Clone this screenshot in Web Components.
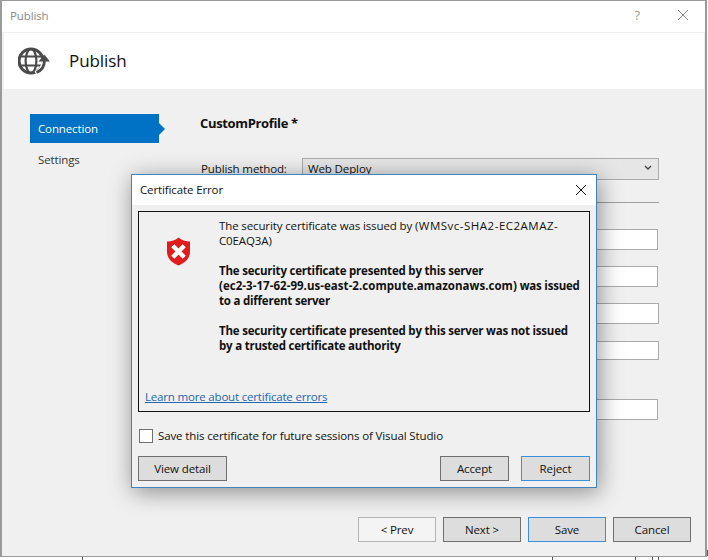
<!DOCTYPE html>
<html>
<head>
<meta charset="utf-8">
<title>Publish</title>
<style>
  html, body { margin: 0; width: 708px; height: 560px; }
  html { background: #fff; }
  body {
    font: 11.5px "Open Sans", "Liberation Sans", sans-serif;
    letter-spacing: -0.12px;
    color: #111;
    overflow: hidden;
    /* bits of the window behind that stick out under and beside the dialog */
    background:
      linear-gradient(#555, #555) 82px 557px / 1px 3px no-repeat,
      linear-gradient(#555, #555) 552px 557px / 1px 3px no-repeat,
      linear-gradient(#555, #555) 635px 557px / 1px 3px no-repeat,
      linear-gradient(#555, #555) 652px 557px / 1px 3px no-repeat,
      linear-gradient(#555, #555) 658px 557px / 1px 3px no-repeat,
      linear-gradient(#555, #555) 707px 550px / 1px 6px no-repeat,
      #fff;
  }
</style>
</head>
<body>
<publish-window>
  <nav-item slot="nav" selected>Connection</nav-item>
  <nav-item slot="nav">Settings</nav-item>

  <form-field slot="form" label="Publish method:" kind="select" value="Web Deploy" height="22" mt="0"></form-field>
  <div slot="form" style="height:1px;background:#a0a0a0;margin:22px 0 26px;width:459px"></div>
  <form-field slot="form" height="21" mt="0" w="356"></form-field>
  <form-field slot="form" height="21" mt="16" w="356"></form-field>
  <form-field slot="form" height="21" mt="16" w="357"></form-field>
  <form-field slot="form" height="19" mt="17" w="357"></form-field>
  <form-field slot="form" height="21" mt="39" w="356"></form-field>

  <vs-button slot="footer" kind="disabled" w="78">&lt; Prev</vs-button>
  <vs-button slot="footer" w="78">Next &gt;</vs-button>
  <vs-button slot="footer" kind="default" w="78">Save</vs-button>
  <vs-button slot="footer" w="78">Cancel</vs-button>

  <cert-dialog slot="overlay">
    <p>The security certificate was issued by <span style="letter-spacing:.5px">(WMSvc-SHA2-EC2AMAZ-</span><br>C0EAQ3A)</p>
    <p><b style="letter-spacing:-.21px">The security certificate presented by this server<br><span style="letter-spacing:.04px">(ec2-3-17-62-99.us-east-2.compute.amazonaws.com)</span> was issued<br>to a different server</b></p>
    <p><b style="letter-spacing:-.21px">The security certificate presented by this server was not issued<br>by a trusted certificate authority</b></p>
  </cert-dialog>
</publish-window>

<script>
(() => {
  const CLOSE = /* html */ `
    <svg width="12" height="12" viewBox="0 0 12 12" fill="none" stroke="currentColor" stroke-width="1">
      <path d="M1 1 11 11M11 1 1 11"/>
    </svg>`;

  class VsButton extends HTMLElement {
    constructor() {
      super();
      this.attachShadow({ mode: "open" });
      const w = this.getAttribute("w") || 69;
      this.shadowRoot.innerHTML = /* html */ `
        <style>
          :host {
            display: flex;
            align-items: center;
            justify-content: center;
            box-sizing: border-box;
            width: ${w}px;
            height: 25px;
            background: #dddddd;
            border: 1px solid #707070;
            color: #111;
          }
          :host([kind="default"]) { border-color: #3c8fdc; }
          :host([kind="disabled"]) { background: #f4f4f4; border-color: #b4b4b4; }
        </style>
        <slot></slot>
      `;
    }
  }

  class NavItem extends HTMLElement {
    constructor() {
      super();
      this.attachShadow({ mode: "open" });
      this.shadowRoot.innerHTML = /* html */ `
        <style>
          :host {
            display: flex;
            align-items: center;
            box-sizing: border-box;
            position: relative;
            width: 129px;
            height: 29px;
            padding: 0 0 1px 8px;
            color: #333;
          }
          :host([selected]) { background: #0072c6; color: #fff; }
          :host([selected])::after {
            content: "";
            position: absolute;
            left: 100%;
            top: 9px;
            border-left: 6px solid #0072c6;
            border-top: 6px solid transparent;
            border-bottom: 6px solid transparent;
          }
        </style>
        <slot></slot>
      `;
    }
  }

  class FormField extends HTMLElement {
    constructor() {
      super();
      this.attachShadow({ mode: "open" });
      const label = this.getAttribute("label") || "";
      const value = this.getAttribute("value") || "";
      const isSelect = this.getAttribute("kind") === "select";
      const width = this.getAttribute("w") || 357;
      this.shadowRoot.innerHTML = /* html */ `
        <style>
          :host {
            display: flex;
            align-items: center;
            margin-top: ${this.getAttribute("mt") || 0}px;
            height: ${this.getAttribute("height") || 21}px;
          }
          .label { width: 102px; padding: 0 0 2px 1px; box-sizing: border-box; }
          .box {
            box-sizing: border-box;
            width: ${width}px;
            height: 100%;
            background: #fff;
            border: 1px solid #ababab;
            display: flex;
            align-items: center;
            justify-content: space-between;
            padding: 0 6px 2px 5px;
          }
          .box.select { background: #e6e6e6; border-color: #acacac; }
          svg { display: block; }
        </style>
        <div class="label">${label}</div>
        <div class="box ${isSelect ? "select" : ""}">
          <span>${value}</span>
          ${isSelect ? `<svg width="8" height="6" viewBox="0 0 8 6" fill="none" stroke="#444" stroke-width="1.4"><path d="M1 1 4 4 7 1"/></svg>` : ""}
        </div>
      `;
    }
  }

  class CertDialog extends HTMLElement {
    constructor() {
      super();
      this.attachShadow({ mode: "open" });
      this.shadowRoot.innerHTML = /* html */ `
        <style>
          :host {
            position: absolute;
            left: 131px;
            top: 174px;
            width: 466px;
            height: 314px;
            box-sizing: border-box;
            display: flex;
            flex-direction: column;
            background: #f0f0f0;
            border: 1px solid #3f84bd;
            box-shadow: 2px 4px 22px rgba(0, 0, 0, 0.42);
          }
          header {
            height: 29px;
            padding: 0 9px 1px 8px;
            flex: none;
            background: #fff;
            display: flex;
            align-items: center;
            justify-content: space-between;
          }
          header svg { display: block; color: #111; }
          .panel {
            box-sizing: border-box;
            margin: 6px 6px 0;
            height: 201px;
            border: 1px solid #111;
            display: flex;
            flex-direction: column;
          }
          .message {
            flex: 1;
            display: flex;
            padding: 6px 8px 0 0;
          }
          .shield { width: 80px; flex: none; padding: 19px 0 0 27px; box-sizing: border-box; }
          .shield svg { display: block; }
          .text { flex: 1; line-height: 15px; white-space: nowrap; }
          ::slotted(p) { margin: 0 0 15px; }
          a {
            margin: 0 0 7px 6px;
            color: #1f67b0;
            text-decoration: underline;
            line-height: 15px;
            letter-spacing: -0.18px;
          }
          .save {
            display: flex;
            align-items: center;
            gap: 5px;
            margin: 16px 0 0 7px;
            height: 15px;
          }
          .check { width: 14px; height: 14px; box-sizing: border-box; border: 1px solid #707070; background: #fff; }
          footer {
            display: flex;
            align-items: center;
            margin: 13px 6px 0;
            gap: 12px;
          }
          .spacer { flex: 1; }
        </style>
        <header>
          <span>Certificate Error</span>
          ${CLOSE}
        </header>
        <div class="panel">
          <div class="message">
            <div class="shield">
              <svg width="25" height="29" viewBox="0 0 25 29">
                <path d="M12.5 0.5C9.6 3 5.4 4.4 1 4.6V14.5C1 21.5 5.8 25.8 12.5 28.5C19.2 25.8 24 21.5 24 14.5V4.6C19.6 4.4 15.4 3 12.5 0.5Z" fill="#df1d1d"/>
                <path d="M6.8 8.8 18.2 20.2M18.2 8.8 6.8 20.2" stroke="#fff" stroke-width="4.4" fill="none"/>
              </svg>
            </div>
            <div class="text"><slot></slot></div>
          </div>
          <a>Learn more about certificate errors</a>
        </div>
        <div class="save"><span class="check"></span><span>Save this certificate for future sessions of Visual Studio</span></div>
        <footer>
          <vs-button w="89">View detail</vs-button>
          <span class="spacer"></span>
          <vs-button w="69">Accept</vs-button>
          <vs-button w="69" kind="default">Reject</vs-button>
        </footer>
      `;
    }
  }

  class PublishWindow extends HTMLElement {
    constructor() {
      super();
      this.attachShadow({ mode: "open" });
      this.shadowRoot.innerHTML = /* html */ `
        <style>
          :host {
            display: flex;
            flex-direction: column;
            box-sizing: border-box;
            width: 707px;
            height: 557px;
            background: #f0f0f0;
            border: 1px solid #9a9a9a;
            border-left-width: 2px;
            border-right-width: 2px;
          }
          .title {
            height: 31px;
            box-sizing: border-box;
            flex: none;
            background: #fff;
            color: #8a8a8a;
            display: flex;
            align-items: center;
            padding: 0 16px 3px 8px;
          }
          .title span { flex: 1; }
          .title .help { flex: none; margin-right: 37px; color: #999; font-size: 13px; }
          .title svg { color: #8a8a8a; }
          .head {
            height: 56px;
            box-sizing: border-box;
            flex: none;
            margin: 1px 1px 0 2px;
            background: #fff;
            display: flex;
            align-items: center;
            padding: 0 0 0 14px;
            gap: 17px;
            font-size: 17px;
            letter-spacing: -0.1px;
            color: #111;
          }
          .head svg { display: block; }
          .head span { padding-bottom: 2px; }
          .main {
            flex: 1;
            display: flex;
            padding: 25px 0 0 28px;
            min-height: 0;
          }
          .nav { width: 170px; flex: none; display: flex; flex-direction: column; gap: 2px; }
          .content { flex: 1; }
          h2 { margin: 0; font-size: 13px; line-height: 18px; font-weight: 700; letter-spacing: -0.35px; color: #111; }
          .form { margin-top: 26px; }
          .footer {
            flex: none;
            display: flex;
            justify-content: flex-end;
            gap: 7px;
            padding: 0 14px 14px 0;
          }
        </style>
        <div class="title">
          <span>Publish</span>
          <span class="help">?</span>
          ${CLOSE}
        </div>
        <div class="head">
          <svg width="34" height="30" viewBox="0 0 34 30" fill="none" stroke="#4a4a4a">
            <circle cx="13" cy="15" r="12" stroke-width="3"/>
            <ellipse cx="13" cy="15" rx="5.4" ry="12" stroke-width="2.2"/>
            <path d="M2 10.5H24M2 19.5H24" stroke-width="2.2"/>
            <path d="M18 28.5C24 26 27 21 27 14" stroke="#fff" stroke-width="7"/>
            <path d="M18.5 26.5C23.5 24.5 26.5 20.5 26.5 14" stroke-width="2.8"/>
            <path d="M20.5 15.5 26.3 8.5 32 15.5Z" fill="#4a4a4a" stroke="none"/>
          </svg>
          <span>Publish</span>
        </div>
        <div class="main">
          <div class="nav"><slot name="nav"></slot></div>
          <div class="content">
            <h2>CustomProfile *</h2>
            <div class="form"><slot name="form"></slot></div>
          </div>
        </div>
        <div class="footer"><slot name="footer"></slot></div>
        <slot name="overlay"></slot>
      `;
    }
  }

  customElements.define("vs-button", VsButton);
  customElements.define("nav-item", NavItem);
  customElements.define("form-field", FormField);
  customElements.define("cert-dialog", CertDialog);
  customElements.define("publish-window", PublishWindow);
})();
</script>
</body>
</html>
